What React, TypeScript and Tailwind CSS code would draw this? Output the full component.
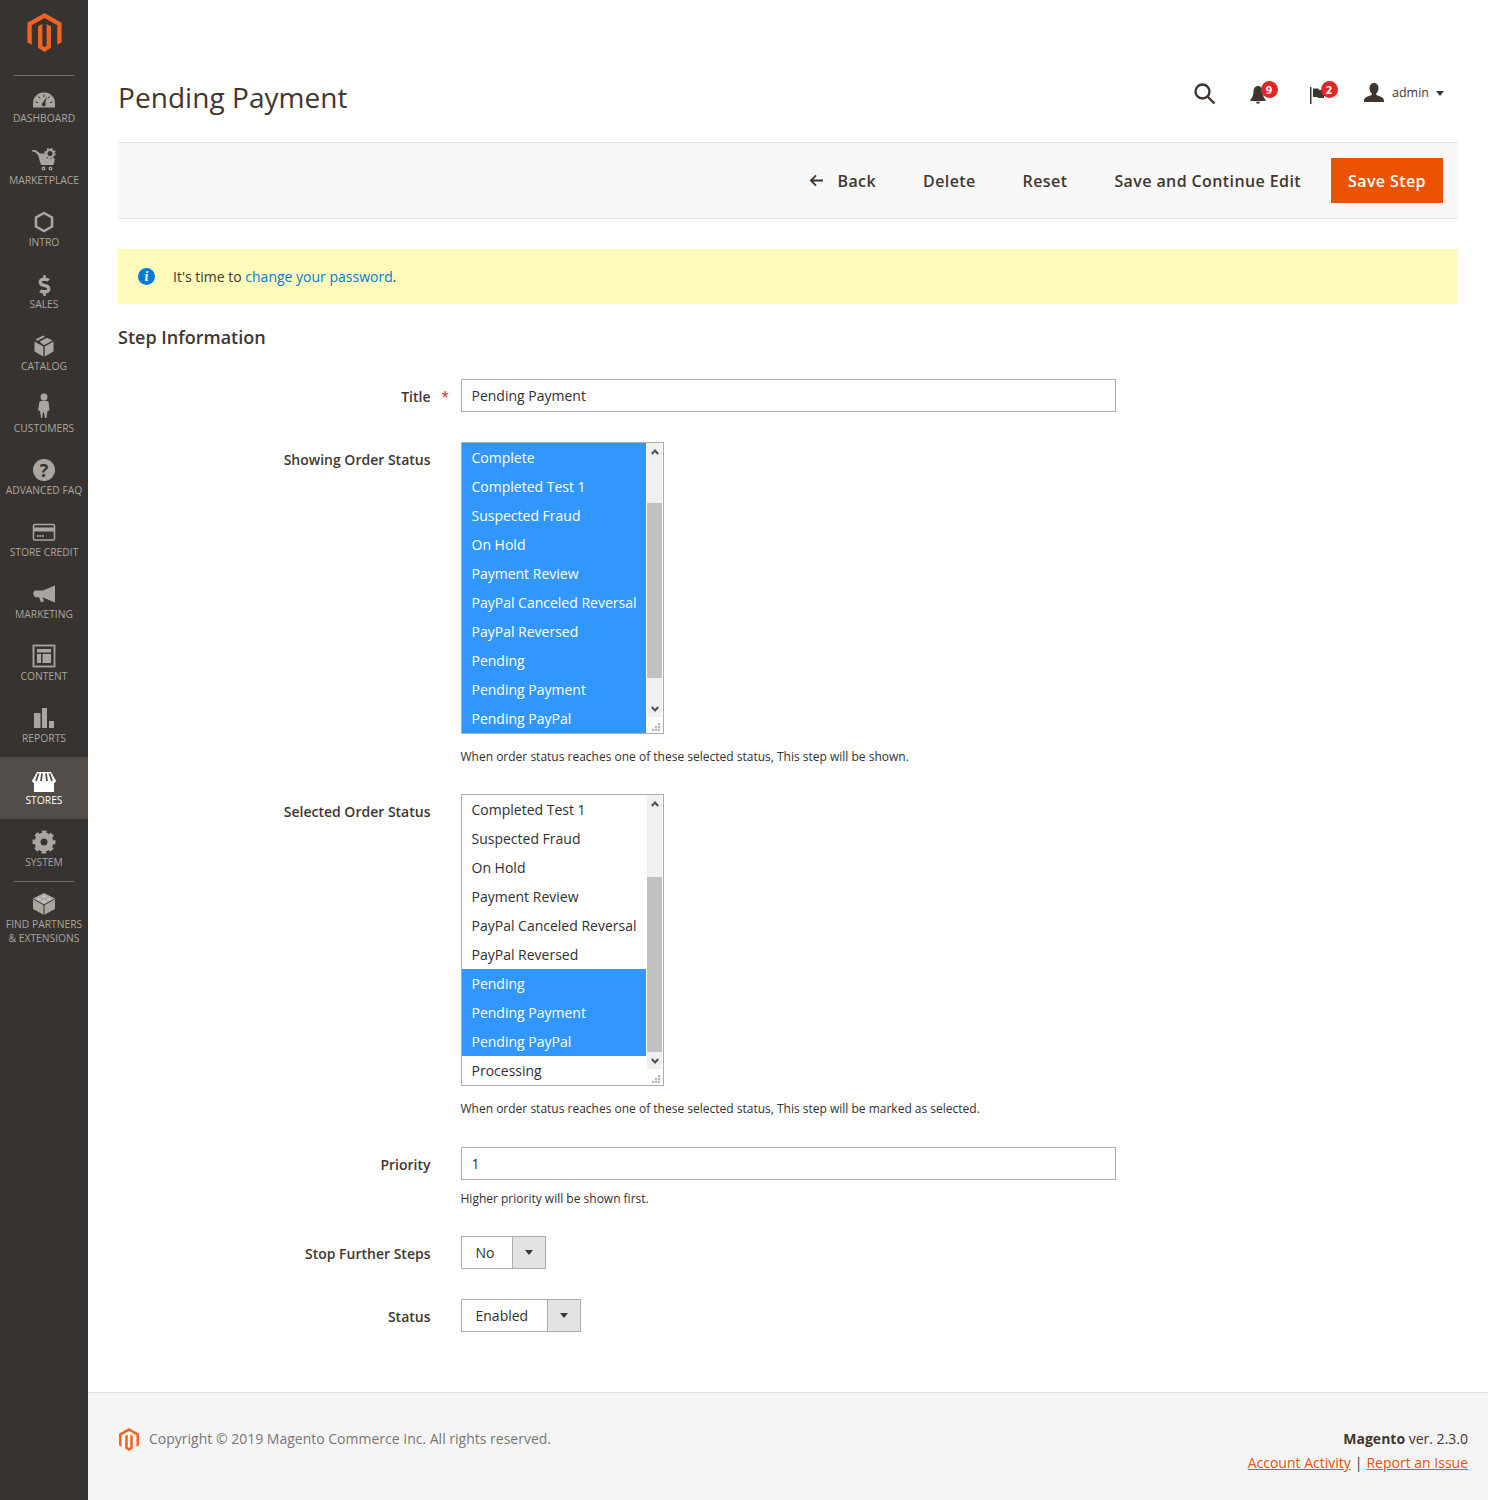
import type { ReactNode } from "react";
import { FaDollarSign } from "react-icons/fa";

const ICON = "h-6 w-6 fill-[#aaa69f]";

function MagentoLogo({ className }: { className: string }) {
  return (
    <svg viewBox="0 0 35 40" className={className}>
      <path
        fill="#f26322"
        d="M17.5 0 35 10v20l-4.400 2.500V12.500L17.500 5 4.400 12.500v20L0 30V10z"
      />
      <path
        fill="#f26322"
        d="M15.300 11.200v22.300l2.200 1.300 2.200-1.300V11.200l4.400 2.500v22L17.500 40l-6.600-4.300v-22z"
      />
    </svg>
  );
}

const navItems: { label: string; icon: ReactNode; active?: boolean }[] = [
  {
    label: "DASHBOARD",
    icon: (
      <svg viewBox="0 0 24 24" className="mt-[3px] h-6 w-6">
        <path fill="#aaa69f" d="M12 4.500C5.500 4.500 1 9.500 1 15v4.500h22V15c0-5.500-4.500-10.500-11-10.500z" />
        <path d="M12 6.500v2.500M6.500 8.500 8 10.500M3.500 14 6 14.800M17.500 8.500 16 10.500M20.500 14 18 14.800" stroke="#373330" strokeWidth="1" />
        <path fill="#373330" d="M15 8.500 13.300 15a2 2 0 1 1-2.400-.6z" />
      </svg>
    ),
  },
  {
    label: "MARKETPLACE",
    icon: (
      <svg viewBox="0 0 24 24" className={ICON}>
        <path d="M0 2h3.500L8 5.500h6l1 5h8l-1.500 6.500H9L6 7 3 4H.8z" />
        <circle cx="11.500" cy="20.500" r="1.300" fill="none" stroke="#aaa69f" strokeWidth="1.300" />
        <circle cx="18.500" cy="20.500" r="1.300" fill="none" stroke="#aaa69f" strokeWidth="1.300" />
        <circle cx="18" cy="5.500" r="3.500" fill="none" stroke="#aaa69f" strokeWidth="2" />
        <circle cx="18" cy="5.500" r="5" fill="none" stroke="#aaa69f" strokeWidth="1.500" strokeDasharray="2 1.930" />
      </svg>
    ),
  },
  {
    label: "INTRO",
    icon: (
      <svg viewBox="0 0 24 24" className="h-6 w-6 fill-none stroke-[#aaa69f] stroke-[2.5]">
        <path d="M12 3 20 7.500v9L12 21l-8-4.500v-9z" />
      </svg>
    ),
  },
  {
    label: "SALES",
    icon: <FaDollarSign className="mt-[2px] h-[21px] w-[13px] text-[#aaa69f]" />,
  },
  {
    label: "CATALOG",
    icon: (
      <svg viewBox="0 0 24 24" className={ICON}>
        <path d="M2.500 7.500 11.300 12.500V22.500L2.500 17.500z" />
        <path d="M21.500 7.500 12.700 12.500V22.500L21.500 17.500z" />
        <path d="M11 1.500 3.500 5.500 5.500 6.800 13 2.700zM15 3.700 7.500 7.800 12 11.300 20.500 6.500z" />
      </svg>
    ),
  },
  {
    label: "CUSTOMERS",
    icon: (
      <svg viewBox="0 0 24 25" className="-mt-[6px] h-[25px] w-6 fill-[#aaa69f]">
        <circle cx="12" cy="4" r="3.500" />
        <path d="M7.500 8.500c1.500-1 7.500-1 9 0l1 9-2 .5-1 7h-1.500l-1-5.500h-1l-1 5.500H9l-1-7-2-.5z" />
      </svg>
    ),
  },
  {
    label: "ADVANCED FAQ",
    icon: (
      <span className="flex h-[22px] w-[22px] items-center justify-center rounded-full bg-[#aaa69f] text-[18px] leading-none font-bold text-[#373330]">
        ?
      </span>
    ),
  },
  {
    label: "STORE CREDIT",
    icon: (
      <svg viewBox="0 0 24 24" className="h-6 w-6">
        <rect x="1.500" y="4.500" width="21" height="15.500" rx="1.500" fill="none" stroke="#aaa69f" strokeWidth="1.500" />
        <rect x="2" y="7.500" width="20" height="4" fill="#aaa69f" />
        <rect x="5" y="15" width="1.600" height="2" fill="#aaa69f" />
        <rect x="7.500" y="15" width="1.600" height="2" fill="#aaa69f" />
        <rect x="10" y="15" width="1.600" height="2" fill="#aaa69f" />
      </svg>
    ),
  },
  {
    label: "MARKETING",
    icon: (
      <svg viewBox="0 0 24 24" className={ICON}>
        <path d="M23 3.500v17L11 15.500l-.4 0 1.400 4-3 .8-2-5H3L1.500 13V10L3 8.500h8z" />
      </svg>
    ),
  },
  {
    label: "CONTENT",
    icon: (
      <svg viewBox="0 0 24 24" className="h-6 w-6">
        <rect x="1.500" y="1.500" width="21" height="21" fill="none" stroke="#aaa69f" strokeWidth="1.800" />
        <rect x="5" y="5" width="14" height="3.500" fill="#aaa69f" />
        <rect x="5" y="10" width="4" height="9" fill="#aaa69f" />
        <rect x="10.500" y="10" width="8.500" height="9" fill="#aaa69f" />
      </svg>
    ),
  },
  {
    label: "REPORTS",
    icon: (
      <svg viewBox="0 0 24 24" className={ICON}>
        <rect x="2" y="7" width="6.500" height="15" />
        <rect x="10" y="2" width="5" height="20" />
        <rect x="17" y="15" width="5" height="7" />
      </svg>
    ),
  },
  {
    label: "STORES",
    active: true,
    icon: (
      <svg viewBox="0 0 24 24" className="h-6 w-6 fill-white">
        <path d="M5 4h14l5 9c-.5 1.500-1.500 2-2 2v9H2v-9c-.5 0-1.500-.5-2-2z" />
        <path d="M6.500 5.500 4 13M10 5.500 9 13M14 5.500l1 7.500M17.500 5.500 20 13" stroke="#524d49" strokeWidth="1.800" />
      </svg>
    ),
  },
  {
    label: "SYSTEM",
    icon: (
      <svg viewBox="0 0 24 24" className="h-6 w-6">
        <circle cx="12" cy="12" r="6.500" fill="none" stroke="#aaa69f" strokeWidth="6" />
        <circle cx="12" cy="12" r="10" fill="none" stroke="#aaa69f" strokeWidth="3" strokeDasharray="4.500 3.354" strokeDashoffset="2.250" />
      </svg>
    ),
  },
];

function NavItem({ label, icon, active }: { label: string; icon: ReactNode; active?: boolean }) {
  return (
    <div
      className={`flex h-[62px] flex-col items-center pt-[11px] text-[10.3px] leading-[14px] ${active ? "bg-[#524d49] text-white" : "text-[#aaa69f]"}`}
    >
      <div className="flex h-6 items-center justify-center">{icon}</div>
      <div className="mt-px whitespace-nowrap">{label}</div>
    </div>
  );
}

function Sidebar() {
  return (
    <aside className="flex w-[88px] shrink-0 flex-col bg-[#373330]">
      <div className="flex h-[75px] justify-center pt-[13px]">
        <MagentoLogo className="h-[39px] w-[35px]" />
      </div>
      <div className="mx-[14px] -mb-px h-px bg-[#736f6b]" />
      {navItems.map((item) => (
        <NavItem key={item.label} {...item} />
      ))}
      <div className="mx-[14px] h-px bg-[#736f6b]" />
      <div className="flex flex-col items-center pt-[10px] text-center text-[10.3px] leading-[14px] text-[#aaa69f]">
        <svg viewBox="0 0 24 24" className="h-6 w-6">
          <path d="M12 1 23 6.500v10.500L12 23 1 17V6.500z" fill="#aaa69f" />
          <path d="M1.500 7 12 13l10.500-6M12 13v10" fill="none" stroke="#373330" strokeWidth="1" />
          <ellipse cx="12" cy="4.500" rx="2.500" ry="1.200" fill="#c8c5c0" />
          <ellipse cx="7" cy="7" rx="2.500" ry="1.200" fill="#c8c5c0" />
          <ellipse cx="17" cy="7" rx="2.500" ry="1.200" fill="#c8c5c0" />
          <ellipse cx="12" cy="9.500" rx="2.500" ry="1.200" fill="#c8c5c0" />
        </svg>
        <div className="mt-px whitespace-nowrap">FIND PARTNERS</div>
        <div className="whitespace-nowrap">&amp; EXTENSIONS</div>
      </div>
    </aside>
  );
}

function Badge({ n }: { n: number }) {
  return (
    <span className="absolute top-[-3.5px] left-[10.5px] flex h-[17px] w-[17px] items-center justify-center rounded-full bg-[#e22626] text-[11px] leading-none font-bold text-white">
      {n}
    </span>
  );
}

function Header() {
  return (
    <header className="flex h-[142px] items-start justify-between">
      <h1 className="mt-[77px] text-[28px] leading-[40px] font-normal tracking-[0.05px] text-[#41362f]">
        Pending Payment
      </h1>
      <div className="mt-[81px] mr-[14px] flex h-[25px] items-center text-[#41362f]">
        <svg viewBox="0 0 22 22" className="h-[22px] w-[22px] fill-none stroke-[#41362f] stroke-[2.4]">
          <circle cx="8.500" cy="8.500" r="7" />
          <path d="m13.500 13.500 7 7" />
        </svg>
        <div className="relative ml-[34px] h-[18px] w-4">
          <svg viewBox="0 0 16 18" className="mt-px h-[18px] w-4 fill-[#41362f]">
            <path d="M8 0c3 0 4.500 2.500 4.500 5.500 0 4 1.500 6.500 3 8V15H.5v-1.500c1.500-1.500 3-4 3-8C3.500 2.500 5 0 8 0z" />
            <path d="M6 15.800h4a2 2 0 0 1-4 0z" />
          </svg>
          <Badge n={9} />
        </div>
        <div className="relative ml-[44px] h-[18px] w-[14px]">
          <svg viewBox="0 0 14 18" className="mt-px h-[18px] w-[14px] fill-[#41362f]">
            <rect x="0" y="1" width="1.500" height="17" />
            <path d="M3 2.500h5l1.500 1.500H14v8H8.500L7 11H3z" />
          </svg>
          <Badge n={2} />
        </div>
        <svg viewBox="0 0 20 19" className="-mt-[3px] ml-[40px] h-[19px] w-5 fill-[#41362f]">
          <path d="M10 0c2.800 0 4.500 2 4.500 5 0 2.500-1 4.500-2.300 5.500V12c2.500 1 7.300 1.500 7.800 5.500V19H0v-1.500C.5 13.500 5.300 13 7.800 12v-1.500C6.500 9.500 5.500 7.500 5.500 5c0-3 1.700-5 4.500-5z" />
        </svg>
        <span className="-mt-[2px] ml-2 text-[12.5px] leading-5">admin</span>
        <span className="ml-[7px] h-0 w-0 border-x-[4px] border-t-[5px] border-x-transparent border-t-[#41362f]" />
      </div>
    </header>
  );
}

function Toolbar() {
  const buttons = ["Delete", "Reset", "Save and Continue Edit"];
  return (
    <div className="flex h-[77px] items-center justify-end border-y border-[#e3e3e3] bg-[#f8f8f8] pr-[15px] text-[16px] font-semibold tracking-[0.4px] text-[#41362f]">
      <svg viewBox="0 0 16 14" className="mr-[13px] h-[13px] w-[15px] fill-none stroke-[#41362f] stroke-2">
        <path d="M15 7H2M7.500 1.500 2 7l5.500 5.500" />
      </svg>
      <span>Back</span>
      {buttons.map((b) => (
        <span key={b} className="ml-[47px]">
          {b}
        </span>
      ))}
      <button className="ml-[30px] h-[45px] w-[112px] bg-[#eb5202] font-semibold text-white">Save Step</button>
    </div>
  );
}

function Message() {
  return (
    <div className="mt-[30px] flex h-[55px] items-center bg-[#fffbbb] pl-5 text-[14px] text-[#41362f]">
      <span className="flex h-[17px] w-[17px] items-center justify-center rounded-full bg-[#007bdb] font-serif text-[13px] leading-none font-bold text-white italic">
        i
      </span>
      <span className="ml-[18px]">
        It's time to <span className="text-[#007bdb]">change your password</span>.
      </span>
    </div>
  );
}

function FormRow({
  label,
  required,
  children,
  className,
}: {
  label: string;
  required?: boolean;
  children: ReactNode;
  className?: string;
}) {
  return (
    <div className={`flex ${className ?? ""}`}>
      <label className="relative w-[313px] shrink-0 pt-[8px] pr-[0.5px] text-right text-[14px] leading-5 font-semibold text-[#41362f]">
        {label}
        {required && <span className="absolute top-[8px] right-[-18px] font-normal text-[#e22626]">*</span>}
      </label>
      <div className="ml-[30px]">{children}</div>
    </div>
  );
}

function TextInput({ value }: { value: string }) {
  return (
    <div className="flex h-[33px] w-[655px] items-center border border-[#adadad] bg-white pl-[9.5px] text-[14px] text-[#303030]">
      {value}
    </div>
  );
}

function Note({ children, className }: { children: ReactNode; className: string }) {
  return <div className={`-ml-[0.5px] text-[12px] leading-[18px] text-[#303030] ${className}`}>{children}</div>;
}

function ListBox({
  options,
  selected,
  thumbOffset,
}: {
  options: string[];
  selected: string[];
  thumbOffset: string;
}) {
  return (
    <div className="flex h-[292px] w-[203px] border border-[#adadad] bg-white text-[14px] leading-[29px]">
      <div className="w-[184px]">
        {options.map((o) => (
          <div
            key={o}
            className={`h-[29px] pl-[9.5px] whitespace-nowrap ${selected.includes(o) ? "bg-[#3297fd] text-white" : "text-[#303030]"}`}
          >
            {o}
          </div>
        ))}
      </div>
      <div className="ml-px flex w-[15px] flex-col">
        <div className="flex h-[17px] items-center justify-center bg-[#f0f0f0]">
          <svg viewBox="0 0 8 6" className="h-[6px] w-2 fill-none stroke-[#505050] stroke-2">
            <path d="M.8 5 4 1.500 7.200 5" />
          </svg>
        </div>
        <div className="flex flex-1 flex-col bg-[#f0f0f0]">
          <div className={thumbOffset} />
          <div className="h-[175px] bg-[#c1c1c1]" />
        </div>
        <div className="flex h-[17px] items-center justify-center bg-[#f0f0f0]">
          <svg viewBox="0 0 8 6" className="h-[6px] w-2 fill-none stroke-[#505050] stroke-2">
            <path d="M.8 1 4 4.500 7.200 1" />
          </svg>
        </div>
        <div className="flex h-4 items-end justify-end bg-white pr-[2px] pb-[2px]">
          <svg viewBox="0 0 8 8" className="h-2 w-2 fill-[#b0b0b0]">
            <rect x="6" y="0" width="2" height="2" />
            <rect x="3" y="3" width="2" height="2" />
            <rect x="6" y="3" width="2" height="2" />
            <rect x="0" y="6" width="2" height="2" />
            <rect x="3" y="6" width="2" height="2" />
            <rect x="6" y="6" width="2" height="2" />
          </svg>
        </div>
      </div>
    </div>
  );
}

function SelectBox({ value, widthClass }: { value: string; widthClass: string }) {
  return (
    <div className={`flex h-[33px] border border-[#adadad] bg-white text-[14px] text-[#303030] ${widthClass}`}>
      <div className="flex flex-1 items-center pl-[13.5px]">{value}</div>
      <div className="flex w-[33px] items-center justify-center border-l border-[#adadad] bg-[#e3e3e3]">
        <span className="h-0 w-0 border-x-[4px] border-t-[5px] border-x-transparent border-t-[#41362f]" />
      </div>
    </div>
  );
}

const showingOptions = [
  "Complete",
  "Completed Test 1",
  "Suspected Fraud",
  "On Hold",
  "Payment Review",
  "PayPal Canceled Reversal",
  "PayPal Reversed",
  "Pending",
  "Pending Payment",
  "Pending PayPal",
];

const selectedOptions = [...showingOptions.slice(1), "Processing"];

function Form() {
  return (
    <div>
      <h2 className="mt-[20px] text-[18px] leading-[26px] font-semibold text-[#41362f]">Step Information</h2>
      <FormRow label="Title" required className="mt-[29px]">
        <TextInput value="Pending Payment" />
      </FormRow>
      <FormRow label="Showing Order Status" className="mt-[30px]">
        <ListBox thumbOffset="h-[43px]" options={showingOptions} selected={showingOptions} />
        <Note className="mt-[14px]">When order status reaches one of these selected status, This step will be shown.</Note>
      </FormRow>
      <FormRow label="Selected Order Status" className="mt-[28px]">
        <ListBox
          thumbOffset="h-[65px]"
          options={selectedOptions}
          selected={["Pending", "Pending Payment", "Pending PayPal"]}
        />
        <Note className="mt-[14px]">
          When order status reaches one of these selected status, This step will be marked as selected.
        </Note>
      </FormRow>
      <FormRow label="Priority" className="mt-[29px]">
        <TextInput value="1" />
        <Note className="mt-[10px]">Higher priority will be shown first.</Note>
      </FormRow>
      <FormRow label="Stop Further Steps" className="mt-[28px]">
        <SelectBox value="No" widthClass="w-[85px]" />
      </FormRow>
      <FormRow label="Status" className="mt-[30px]">
        <SelectBox value="Enabled" widthClass="w-[120px]" />
      </FormRow>
    </div>
  );
}

function Footer() {
  return (
    <footer className="mt-[60px] flex h-[108px] justify-between border-t border-[#e3e3e3] bg-[#f5f5f5] pt-[34px] pr-5 pl-[31px] text-[14px] leading-[24px] text-[#41362f]">
      <div className="flex h-6 items-center">
        <MagentoLogo className="h-[23px] w-[20px]" />
        <span className="ml-[10px] text-[#777]">Copyright © 2019 Magento Commerce Inc. All rights reserved.</span>
      </div>
      <div className="text-right">
        <div>
          <span className="font-bold">Magento</span> ver. 2.3.0
        </div>
        <div>
          <span className="text-[#eb5202] underline">Account Activity</span>
          <span className="mx-[4px]">|</span>
          <span className="text-[#eb5202] underline">Report an Issue</span>
        </div>
      </div>
    </footer>
  );
}

export default function App() {
  return (
    <div className="flex min-h-[1500px] bg-white font-['Open_Sans',sans-serif]">
      <Sidebar />
      <div className="flex min-w-0 flex-1 flex-col">
        <main className="px-[30px]">
          <Header />
          <Toolbar />
          <Message />
          <Form />
        </main>
        <Footer />
      </div>
    </div>
  );
}
